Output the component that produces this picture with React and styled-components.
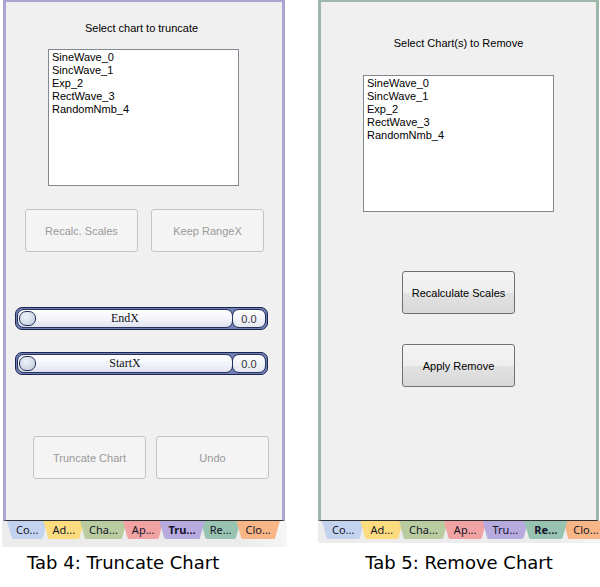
import React from 'react';
import styled, { createGlobalStyle } from 'styled-components';

const GlobalStyle = createGlobalStyle`
  html, body {
    margin: 0;
    padding: 0;
    background: #ffffff;
  }
  body {
    font-family: "Liberation Sans", Arial, sans-serif;
  }
`;

const Page = styled.div`
  display: flex;
  gap: 31px;
  width: 600px;
  height: 587px;
  padding-left: 2px;
  box-sizing: border-box;
  overflow: hidden;
`;

const Column = styled.div`
  display: flex;
  flex-direction: column;
  width: ${p => p.$width}px;
  flex: none;
`;

const Frame = styled.div`
  box-sizing: border-box;
  display: flex;
  flex-direction: column;
  align-items: ${p => (p.$centered ? 'center' : 'flex-start')};
  width: ${p => p.$width}px;
  height: 521px;
  margin-left: ${p => p.$offset}px;
  border: 3px solid ${p => p.$color};
  border-top-width: 2px;
  border-bottom: 1px solid #2e2e2e;
  background: #f0f0f0;
`;

const Title = styled.div`
  align-self: stretch;
  margin-top: ${p => p.$top}px;
  padding-right: ${p => p.$nudge || 0}px;
  font-size: 11px;
  line-height: 13px;
  color: #000;
  text-align: center;
`;

const ListBox = styled.ul`
  box-sizing: border-box;
  width: 191px;
  height: 137px;
  margin: ${p => p.$top}px 0 0 ${p => p.$left || 0}px;
  padding: 1px 3px;
  list-style: none;
  border: 1px solid #828790;
  background: #ffffff;
`;

const ListItem = styled.li`
  font-size: 11px;
  line-height: 13px;
  color: #000;
`;

const ButtonRow = styled.div`
  display: flex;
  gap: ${p => p.$gap}px;
  margin: ${p => p.$top}px 0 0 ${p => p.$left || 0}px;
`;

const Button = styled.button`
  box-sizing: border-box;
  width: 113px;
  height: 43px;
  padding: 0;
  margin: ${p => p.$top || 0}px 0 0 0;
  font-family: "Liberation Sans", Arial, sans-serif;
  font-size: 11px;
  border-radius: 3px;
  color: ${p => (p.disabled ? '#9a9a9a' : '#000')};
  border: 1px solid ${p => (p.disabled ? '#c4c4c4' : '#707070')};
  background: ${p =>
    p.disabled
      ? '#f4f4f4'
      : 'linear-gradient(#f4f4f4 0%, #eeeeee 50%, #e2e2e2 52%, #d8d8d8 100%)'};
`;

const Slider = styled.div`
  box-sizing: border-box;
  display: flex;
  width: 253px;
  height: 23px;
  margin: ${p => p.$top}px 0 0 ${p => p.$left}px;
  padding: 1px;
  border: 1px solid #1c2550;
  border-radius: 7px;
  background: #6f7fb3;
`;

const Track = styled.div`
  position: relative;
  flex: 1;
  display: flex;
  align-items: center;
  justify-content: center;
  border: 1px solid #26315c;
  border-radius: 7px;
  background: linear-gradient(#ffffff, #f1f2fa 60%, #dfe2ee);
  font-family: "Liberation Serif", "Times New Roman", serif;
  font-size: 12px;
  color: #111;
`;

const Thumb = styled.span`
  position: absolute;
  left: 1px;
  top: 1px;
  bottom: 1px;
  width: 17px;
  box-sizing: border-box;
  border: 1px solid #26315c;
  border-radius: 7px;
  background: radial-gradient(circle at 40% 35%, #f0f3f8, #bcc8d9);
`;

const ValueBox = styled.div`
  box-sizing: border-box;
  display: flex;
  align-items: center;
  justify-content: center;
  width: 34px;
  margin-left: -1px;
  border: 1px solid #26315c;
  border-radius: 7px;
  background: linear-gradient(#ffffff, #e6e8f2);
  font-size: 11px;
  color: #333;
`;

const TabStrip = styled.div`
  display: flex;
  align-items: flex-start;
  height: ${p => p.$height}px;
  padding-left: ${p => p.$left}px;
  background: linear-gradient(90deg, #ececec 85%, #f6f6f6);
`;

const Tab = styled.div`
  position: relative;
  z-index: ${p => (p.$active ? 2 : 1)};
  height: 18px;
  padding: 0 ${p => p.$pad}px;
  margin-left: -4px;
  font-family: "Noto Sans", "DejaVu Sans", sans-serif;
  font-size: 11px;
  line-height: 18px;
  font-weight: ${p => (p.$active ? 700 : 400)};
  color: #15152a;
  background: ${p => p.$color};
  border-radius: 0 0 7px 7px;
  clip-path: polygon(0 0, 100% 0, calc(100% - 5px) 100%, 5px 100%);

  &:first-child {
    margin-left: 0;
  }
`;

const Caption = styled.div`
  margin-top: ${p => p.$top}px;
  padding-left: ${p => p.$left || 0}px;
  font-family: "DejaVu Sans", sans-serif;
  font-size: 18px;
  line-height: 22px;
  color: #000;
  text-align: ${p => (p.$centered ? 'center' : 'left')};
`;

const charts = ['SineWave_0', 'SincWave_1', 'Exp_2', 'RectWave_3', 'RandomNmb_4'];

const tabs = [
  { label: 'Co...', color: '#c3d3ef' },
  { label: 'Ad...', color: '#fcdc7e' },
  { label: 'Cha...', color: '#b9cca0' },
  { label: 'Ap...', color: '#f1a2a2' },
  { label: 'Tru...', color: '#b6aadf' },
  { label: 'Re...', color: '#99c3b1' },
  { label: 'Clo...', color: '#f8b585' },
];

const Tabs = ({ active, height, left, pad }) => (
  <TabStrip $height={height} $left={left}>
    {tabs.map(t => (
      <Tab key={t.label} $color={t.color} $pad={pad} $active={t.label === active}>
        {t.label}
      </Tab>
    ))}
  </TabStrip>
);

const RangeSlider = ({ label, top }) => (
  <Slider $top={top} $left={9}>
    <Track>
      <Thumb />
      {label}
    </Track>
    <ValueBox>0.0</ValueBox>
  </Slider>
);

const ChartList = ({ top, left }) => (
  <ListBox $top={top} $left={left}>
    {charts.map(c => (
      <ListItem key={c}>{c}</ListItem>
    ))}
  </ListBox>
);

const App = () => (
  <>
    <GlobalStyle />
    <Page>
      <Column $width={285}>
        <Frame $width={282} $offset={1} $color="#aaa6d2">
          <Title $top={20} $nudge={5}>Select chart to truncate</Title>
          <ChartList top={14} left={42} />
          <ButtonRow $top={23} $left={19} $gap={13}>
            <Button disabled>Recalc. Scales</Button>
            <Button disabled>Keep RangeX</Button>
          </ButtonRow>
          <RangeSlider label="EndX" top={55} />
          <RangeSlider label="StartX" top={22} />
          <ButtonRow $top={61} $left={27} $gap={10}>
            <Button disabled>Truncate Chart</Button>
            <Button disabled>Undo</Button>
          </ButtonRow>
        </Frame>
        <Tabs active="Tru..." height={26} left={5} pad={9} />
        <Caption $top={5} $left={25}>Tab 4: Truncate Chart</Caption>
      </Column>

      <Column $width={282}>
        <Frame $width={281} $offset={0} $color="#9fb6ab" $centered>
          <Title $top={35}>Select Chart(s) to Remove</Title>
          <ChartList top={25} />
          <Button $top={59}>Recalculate Scales</Button>
          <Button $top={30}>Apply Remove</Button>
        </Frame>
        <Tabs active="Re..." height={22} left={4} pad={10} />
        <Caption $top={9} $centered>Tab 5: Remove Chart</Caption>
      </Column>
    </Page>
  </>
);

export default App;
